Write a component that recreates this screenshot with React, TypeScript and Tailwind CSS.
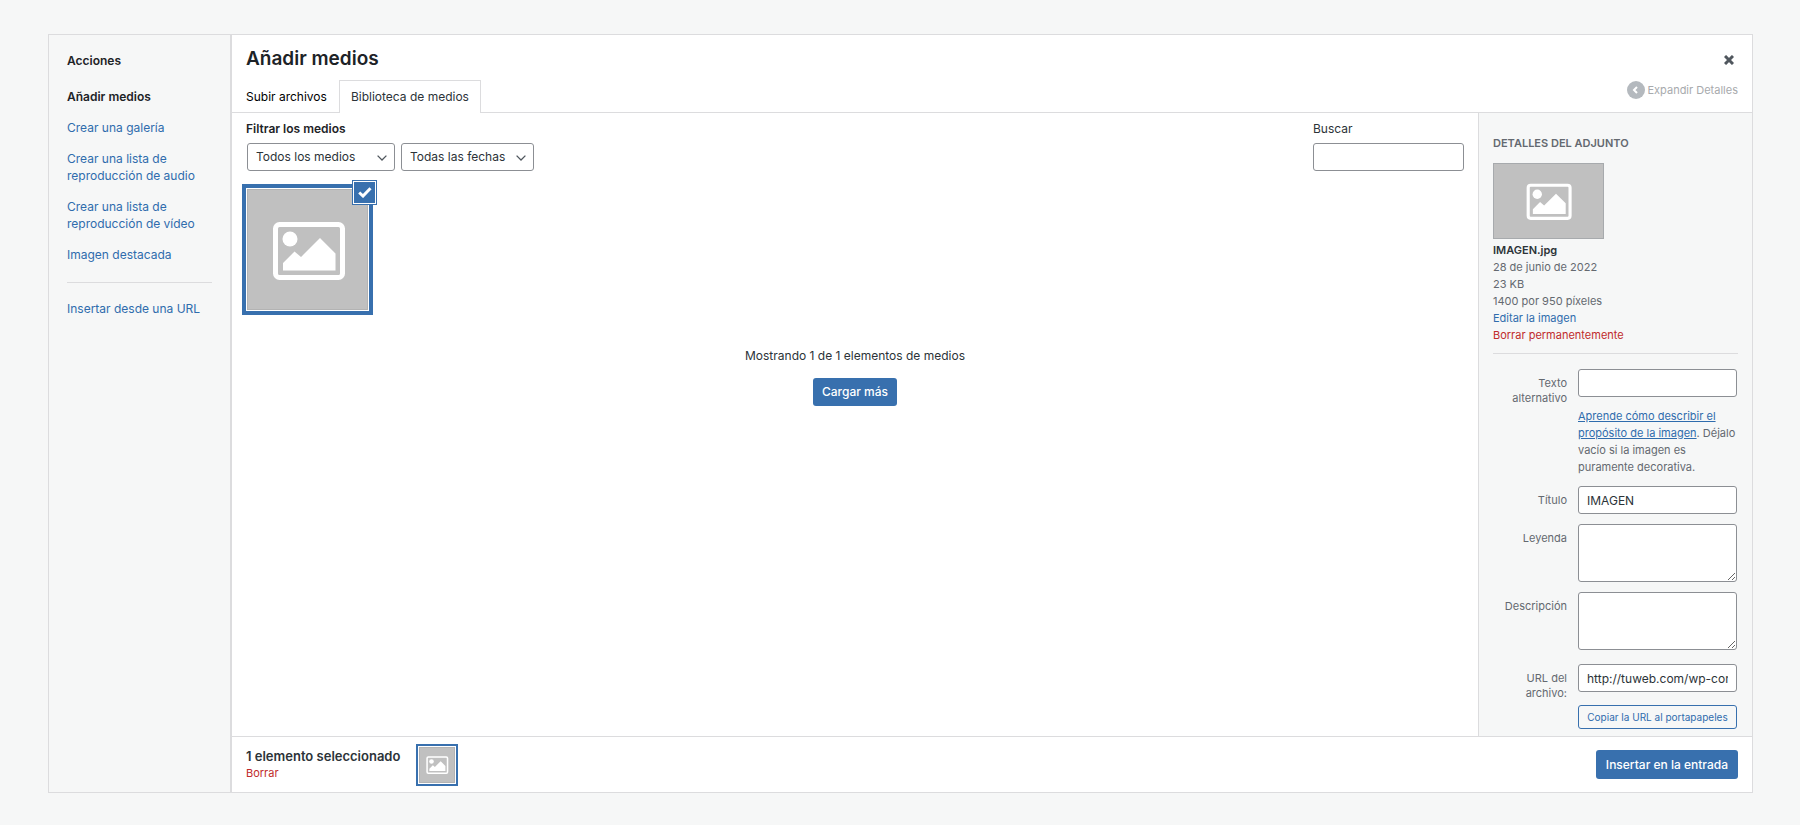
import React, { useState } from "react";

const menuItems = [
  "Crear una galería",
  "Crear una lista de reproducción de audio",
  "Crear una lista de reproducción de vídeo",
  "Imagen destacada",
];

const inputClass =
  "block w-full rounded-[3px] border border-[#8c8f94] bg-white px-2 text-xs text-[#2c3338]";

const ImageIcon: React.FC<{ className?: string }> = ({ className }) => (
  <svg viewBox="-1 -1 72 58" className={`overflow-visible ${className}`} fill="#fff" aria-hidden="true">
    <rect x="2.5" y="2.5" width="67" height="53" rx="4" fill="none" stroke="#fff" strokeWidth="5" />
    <circle cx="17" cy="17" r="7.5" />
    <path d="M10 48.500V41L21.500 29.500L28 35L47 16L62.500 31.500V48.500Z" />
  </svg>
);

interface FilterSelectProps {
  label: string;
  options: string[];
  className: string;
}

const FilterSelect: React.FC<FilterSelectProps> = ({ label, options, className }) => (
  <div className={`relative ${className}`}>
    <select
      aria-label={label}
      className="h-7 w-full appearance-none rounded-[3px] border border-[#8c8f94] bg-white pl-2 pr-6 text-xs text-[#2c3338]"
    >
      {options.map((option) => (
        <option key={option}>{option}</option>
      ))}
    </select>
    <svg
      viewBox="0 0 10 6"
      className="pointer-events-none absolute right-2 top-3 h-[6px] w-[10px]"
      fill="none"
      stroke="#50575e"
      strokeWidth="1.3"
      aria-hidden="true"
    >
      <path d="M0.600 0.600L5 5L9.400 0.600" />
    </svg>
  </div>
);

interface FieldProps {
  id: string;
  label: string;
  children: React.ReactNode;
}

const Field: React.FC<FieldProps> = ({ id, label, children }) => (
  <div className="flex gap-[11px]">
    <label htmlFor={id} className="w-[74px] shrink-0 pt-[7px] text-right text-[11px] leading-[15px] text-[#646970]">
      {label}
    </label>
    <div className="min-w-0 flex-1">{children}</div>
  </div>
);

const App: React.FC = () => {
  const [title, setTitle] = useState("IMAGEN");
  const [selected, setSelected] = useState(true);

  return (
    <div className="flex min-h-screen bg-[#f6f7f7] pt-[34px] pr-[47px] pb-8 pl-12 font-['Inter',sans-serif] text-[#2c3338]">
      <div className="flex flex-1 border border-[#dcdcde]">
        <aside className="w-[183px] shrink-0 border-r-2 border-[#dcdcde] px-[18px] pt-[18px]">
          <h2 className="text-xs leading-4 font-semibold text-[#1d2327]">Acciones</h2>
          <nav className="mt-3 text-xs leading-[17px]">
            <a href="#anadir" className="block py-[7px] font-semibold text-[#1d2327]">
              Añadir medios
            </a>
            {menuItems.map((item) => (
              <a key={item} href="#menu" className="block py-[7px] text-[#2f6cad]">
                {item}
              </a>
            ))}
            <hr className="mt-3 mb-[17px] border-[#dcdcde]" />
            <a href="#url" className="block whitespace-nowrap text-[#2f6cad]">
              Insertar desde una URL
            </a>
          </nav>
        </aside>

        <div className="flex min-w-0 flex-1 flex-col bg-white">
          <header className="border-b border-[#dcdcde] px-[14px]">
            <div className="flex h-[45px] items-center justify-between pt-1">
              <h1 className="text-[19px] font-semibold text-[#1d2327]">Añadir medios</h1>
              <button type="button" aria-label="Cerrar" className="p-1">
                <svg viewBox="0 0 10 10" className="size-[10px]" stroke="#50575e" strokeWidth="3" aria-hidden="true">
                  <path d="M1 1L9 9M9 1L1 9" />
                </svg>
              </button>
            </div>
            <div className="-mb-px flex items-end justify-between">
              <div className="flex text-xs" role="tablist">
                <button type="button" role="tab" aria-selected="false" className="h-[33px] pr-3 text-black">
                  Subir archivos
                </button>
                <button
                  type="button"
                  role="tab"
                  aria-selected="true"
                  className="h-[33px] border border-b-0 border-[#dcdcde] bg-white px-[11px]"
                >
                  Biblioteca de medios
                </button>
              </div>
              <button type="button" className="mb-[14px] flex items-center gap-[3px] text-[11px] text-[#a7aaad]">
                <svg viewBox="0 0 18 18" className="size-[18px]" fill="none" aria-hidden="true">
                  <circle cx="9" cy="9" r="9" fill="#b4b9be" />
                  <path d="M10 6L7 9L10 12" stroke="#fff" strokeWidth="2" />
                </svg>
                Expandir Detalles
              </button>
            </div>
          </header>

          <div className="flex flex-1">
            <main className="min-w-0 flex-1 px-[14px] pt-2">
              <div className="flex justify-between">
                <div>
                  <h2 className="text-xs leading-4 font-semibold text-[#1d2327]">Filtrar los medios</h2>
                  <div className="mt-[6px] flex gap-[6px] pl-px">
                    <FilterSelect label="Filtrar por tipo" options={["Todos los medios", "Imágenes"]} className="w-[148px]" />
                    <FilterSelect label="Filtrar por fecha" options={["Todas las fechas", "junio 2022"]} className="w-[133px]" />
                  </div>
                </div>
                <div className="w-[151px]">
                  <label htmlFor="search" className="block text-xs leading-4">
                    Buscar
                  </label>
                  <input id="search" type="search" className={`mt-[6px] h-7 ${inputClass}`} />
                </div>
              </div>

              <div className="relative -ml-1 mt-[13px] w-[131px]">
                <button
                  type="button"
                  aria-label="IMAGEN"
                  onClick={() => setSelected(true)}
                  className={`block w-full border-4 p-px ${selected ? "border-[#3870ae]" : "border-transparent"}`}
                >
                  <span className="flex h-[121px] items-center justify-center border border-[#b3b3b3] bg-[#c0c0c0]">
                    <ImageIcon className="w-[72px]" />
                  </span>
                </button>
                {selected && (
                  <button
                    type="button"
                    aria-label="Deseleccionar"
                    onClick={() => setSelected(false)}
                    className="absolute -right-1 -top-1 flex size-[25px] items-center justify-center border border-[#3870ae] bg-[#3870ae] shadow-[inset_0_0_0_1px_#fff]"
                  >
                    <svg viewBox="0 0 14 11" className="h-[11px] w-[14px]" fill="none" stroke="#fff" strokeWidth="3" aria-hidden="true">
                      <path d="M1.200 5.500L5 9L12.500 1.200" />
                    </svg>
                  </button>
                )}
              </div>

              <div className="mt-[33px] flex flex-col items-center gap-[14px]">
                <p className="text-xs leading-4">Mostrando 1 de 1 elementos de medios</p>
                <button type="button" className="h-7 rounded-[3px] bg-[#3870ae] px-[9px] text-xs font-medium text-white">
                  Cargar más
                </button>
              </div>
            </main>

            <aside className="w-[274px] shrink-0 border-l border-[#dcdcde] bg-[#f6f7f7] px-[14px] pb-[6px] text-[11px] text-[#646970]">
              <h2 className="mt-[22px] leading-4 font-semibold">DETALLES DEL ADJUNTO</h2>
              <div className="mt-3 flex h-[76px] w-[111px] items-center justify-center border border-[#a7aaad] bg-[#c0c0c0]">
                <ImageIcon className="w-[45px]" />
              </div>
              <div className="mt-[3px] leading-[17px]">
                <p className="font-semibold text-[#2c3338]">IMAGEN.jpg</p>
                <p>28 de junio de 2022</p>
                <p>23 KB</p>
                <p>1400 por 950 píxeles</p>
                <a href="#editar" className="block text-[#2f6cad]">
                  Editar la imagen
                </a>
                <button type="button" className="block text-[#c02b2c]">
                  Borrar permanentemente
                </button>
              </div>
              <hr className="mt-[9px] mb-[15px] border-[#dcdcde]" />

              <div className="flex flex-col gap-[10px] pr-px">
                <Field id="alt" label="Texto alternativo">
                  <input id="alt" type="text" className={`h-7 ${inputClass}`} />
                  <p className="mt-[11px] leading-[17px]">
                    <a href="#aprende" className="text-[#2f6cad] underline">
                      Aprende cómo describir el propósito de la imagen
                    </a>
                    . Déjalo vacío si la imagen es puramente decorativa.
                  </p>
                </Field>
                <Field id="title" label="Título">
                  <input
                    id="title"
                    type="text"
                    value={title}
                    onChange={(e) => setTitle(e.target.value)}
                    className={`h-7 ${inputClass}`}
                  />
                </Field>
                <Field id="caption" label="Leyenda">
                  <textarea id="caption" className={`h-[58px] resize ${inputClass}`} />
                </Field>
                <Field id="description" label="Descripción">
                  <textarea id="description" className={`h-[58px] resize ${inputClass}`} />
                </Field>
                <div className="mt-1">
                  <Field id="file-url" label="URL del archivo:">
                    <input
                      id="file-url"
                      type="text"
                      readOnly
                      value="http://tuweb.com/wp-content/uploads/2022/06/IMAGEN.jpg"
                      className={`h-7 ${inputClass}`}
                    />
                    <button
                      type="button"
                      className="mt-[13px] h-6 w-full whitespace-nowrap rounded-[3px] border border-[#3870ae] text-[10px] text-[#2f6cad]"
                    >
                      Copiar la URL al portapapeles
                    </button>
                  </Field>
                </div>
              </div>
            </aside>
          </div>

          <footer className="flex h-14 items-center justify-between border-t border-[#dcdcde] px-[14px]">
            <div className="flex items-center gap-4">
              <div>
                <p className="text-[13px] leading-[18px] font-semibold">1 elemento seleccionado</p>
                <button type="button" className="block text-[11px] leading-[17px] text-[#c02b2c]">
                  Borrar
                </button>
              </div>
              <div className="border-2 border-[#3870ae] p-px">
                <div className="flex size-9 items-center justify-center border border-[#b3b3b3] bg-[#c0c0c0]">
                  <ImageIcon className="w-[22px]" />
                </div>
              </div>
            </div>
            <button type="button" className="h-[29px] rounded-[3px] bg-[#3870ae] px-[10px] text-xs font-medium text-white">
              Insertar en la entrada
            </button>
          </footer>
        </div>
      </div>
    </div>
  );
};

export default App;
